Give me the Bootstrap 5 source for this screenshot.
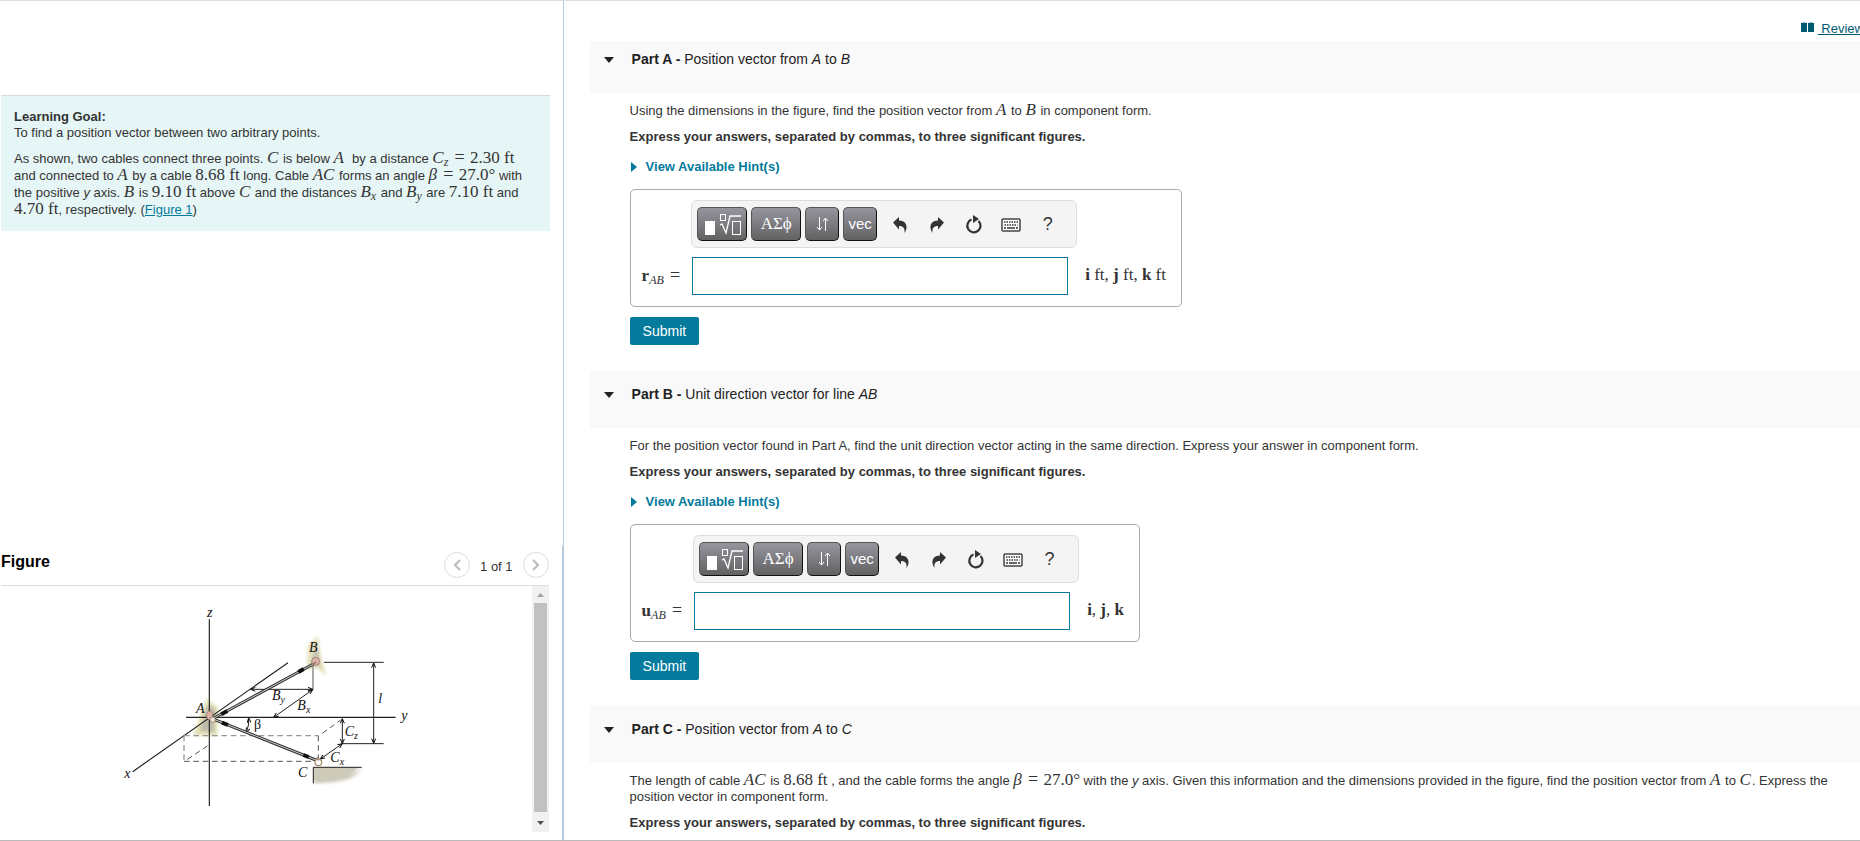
<!DOCTYPE html>
<html lang="en">
<head>
<meta charset="utf-8">
<meta name="viewport" content="width=device-width, initial-scale=1">
<title>Position vectors between two points</title>
<link href="https://cdn.jsdelivr.net/npm/bootstrap@5.3.0/dist/css/bootstrap.min.css" rel="stylesheet">
<style>
  body { font: 13px/16px "Liberation Sans", Arial, sans-serif; color: #333; background: #fff; }
  p { margin-bottom: 10px; }
  a { color: #047a9c; }
  .screen { height: 100vh; border-top: 1px solid #ddd; border-bottom: 1px solid #bbb; }
  .side { flex: 0 0 30.3%; min-width: 0; }
  .side-top { border-right: 1px solid #b8cbdd; padding: 94px 13px 0 1px; }
  .side-bottom { border-right: 2px solid #b8cbdd; padding: 0 13px 8px 1px; }
  .goal { background: #e6f6f6; border-top: 1px solid #d6dcdc; padding: 13px 13px 3px; line-height: 17px; }
  .goal .intro { line-height: 16px; margin-bottom: 9px; }
  .tex { font-family: "Liberation Serif", "Times New Roman", serif; font-size: 17px; line-height: 0; white-space: nowrap; }
  .tex sub, .tex sup { font-size: 12px; }
  .tex i { padding-right: 1px; }
  .rel { font-size: 18px; padding: 0 1px; }
  .fig-head { height: 40px; border-bottom: 1px solid #ddd; padding-bottom: 2px; }
  .fig-head h2 { font-size: 16px; line-height: 20px; font-weight: 700; color: #000; padding-bottom: 5px; }
  .pager { width: 26px; height: 26px; border: 1px solid #ddd; border-radius: 50%; background: #fff; }
  .page-no { padding: 5px 10px 0; }
  .fig-body { height: 246px; }
  .diagram { width: 330px; height: 230px; margin: 4px 0 0 99px; }
  .track { width: 17px; background: #f1f1f1; }
  .thumb { width: 13px; background: #c1c1c1; }
  .main { min-width: 0; padding-left: 26px; }
  .review { height: 40px; padding-top: 20px; white-space: nowrap; margin-right: -4px; }
  .review a { color: #005a70; }
  .part-bar { background: #f9f9f9; padding: 15px 14px; font-size: 14px; color: #222; height: 57px; }
  .part-bar.pinned { height: 52px; padding-top: 10px; }
  .part-bar button { width: 28px; }
  .part-body { padding: 10px 30px 26px 40px; }
  .hint { color: #047a9c; font-size: 13px; line-height: 16px; margin: 14px 0; }
  .answer { border: 1px solid #aaa; border-radius: 5px; padding: 10px 15px 11px 11px; }
  .answer label { margin: 57px 10px 0 0; height: 38px; line-height: 36px; }
  .units { margin: 57px 0 0 8px; height: 38px; line-height: 36px; }
  .editor { width: 386px; }
  .tools { height: 48px; border: 1px solid #ddd; border-radius: 6px; background: #f4f4f4; padding: 0 5px; gap: 4px; margin-bottom: 9px; }
  .key { height: 34px; border: 1px solid #000; border-color: #555 #111 #111 #555; border-radius: 5px; background: linear-gradient(#96959e, #626262); color: #fff; }
  .key.wide { width: 50px; }
  .key.slim { width: 34px; }
  .key .greek { font: 17px/30px "Liberation Serif", serif; }
  .key .word { font-size: 15px; line-height: 28px; }
  .tool { width: 37px; height: 34px; color: #333; }
  .tool .qmark { font-size: 18px; }
  .entry { width: 376px; height: 38px; border: 1px solid #047a9c; border-radius: 0; margin-left: 1px; }
  .send { background: #047a9c; color: #fff; font-size: 14px; line-height: 16px; border: 0; border-radius: 2px; padding: 6px 13px; margin-top: 10px; }
</style>
</head>
<body>
<svg class="d-none" xmlns="http://www.w3.org/2000/svg">
  <symbol id="i-root" viewBox="0 0 40 26"><rect x="3" y="10" width="10" height="14" fill="#fff"/><g fill="none" stroke="#fff"><rect x="18.500" y="3.500" width="5" height="6"/><path d="M18 14l2-1 4 9 4-17h11" stroke-width="1.300"/><rect x="30.500" y="10.500" width="8" height="13"/></g></symbol>
  <symbol id="i-swap" viewBox="0 0 14 18"><g fill="none" stroke="#fff"><path d="M4.500 2v13M2 12l2.500 3L7 12M10.500 16V3M8 6l2.500-3L13 6"/></g></symbol>
  <symbol id="i-undo" viewBox="0 0 14 16"><path fill="#333" d="M0 5.500L6 0v3.500c5 0 8 3 7.500 7.500-.3 2-1 3.500-2 5 .5-5-1-7-5.500-7v3.500z"/></symbol>
  <symbol id="i-reset" viewBox="0 0 18 20"><path d="M6.500 4.600A6.600 6.600 0 1 0 13.500 6" fill="none" stroke="#333" stroke-width="2.200"/><path fill="#333" d="M8 0l6 4-6 4z"/></symbol>
  <symbol id="i-keys" viewBox="0 0 20 14"><rect x="1" y="1" width="18" height="12" rx="1" fill="#fff" stroke="#444" stroke-width="1.500"/><path d="M3 4h14M3.500 7h13" stroke="#333" stroke-width="1.500" stroke-dasharray="1.500 1"/><path d="M3 10h2m1 0h8m1 0h2" stroke="#333" stroke-width="1.500"/></symbol>
</svg>

<div class="screen d-flex overflow-hidden">
  <aside class="side d-flex flex-column">
    <div class="side-top flex-fill">
      <section class="goal">
        <p class="intro"><strong>Learning Goal:</strong><br>To find a position vector between two arbitrary points.</p>
        <p>As shown, two cables connect three points. <span class="tex"><i>C</i></span> is below <span class="tex"><i>A</i></span>&nbsp; by a distance <span class="tex"><i>C<sub>z</sub></i> <span class="rel">=</span> 2.30 ft</span><br>
        and connected to <span class="tex"><i>A</i></span> by a cable <span class="tex">8.68 ft</span> long. Cable <span class="tex"><i>AC</i></span> forms an angle <span class="tex"><i>β</i> <span class="rel">=</span> 27.0°</span> with<br>
        the positive <i>y</i> axis. <span class="tex"><i>B</i></span> is <span class="tex">9.10 ft</span> above <span class="tex"><i>C</i></span> and the distances <span class="tex"><i>B<sub>x</sub></i></span> and <span class="tex"><i>B<sub>y</sub></i></span> are <span class="tex">7.10 ft</span> and<br>
        <span class="tex">4.70 ft</span>, respectively. (<a href="#figure">Figure 1</a>)</p>
      </section>
    </div>

    <section class="side-bottom" id="figure">
      <div class="fig-head d-flex align-items-center">
        <h2 class="m-0 me-auto">Figure</h2>
        <button class="pager p-0 d-flex align-items-center justify-content-center" aria-label="Previous figure"><svg width="8" height="12" viewBox="0 0 8 12"><path d="M7 1L2 6l5 5" fill="none" stroke="#bbb" stroke-width="2"/></svg></button>
        <span class="page-no">1 of 1</span>
        <button class="pager p-0 d-flex align-items-center justify-content-center" aria-label="Next figure"><svg width="8" height="12" viewBox="0 0 8 12"><path d="M1 1l5 5-5 5" fill="none" stroke="#bbb" stroke-width="2"/></svg></button>
      </div>
      <div class="fig-body d-flex justify-content-between">
        <svg class="diagram" viewBox="0 0 990 690" role="img" aria-label="Cables AB and AC with axes x, y and z">
          <defs>
            <filter id="soft" x="-30%" y="-30%" width="160%" height="160%"><feGaussianBlur stdDeviation="5"/></filter>
            <marker id="tip" viewBox="0 0 16 14" refX="15" refY="7" markerWidth="16" markerHeight="14" markerUnits="userSpaceOnUse" orient="auto-start-reverse"><path d="M1 1L15 7 1 13" fill="none" stroke="#111" stroke-width="3"/></marker>
            <linearGradient id="ground"><stop offset="0" stop-color="#cdcab9"/><stop offset=".7" stop-color="#cfccbc"/><stop offset="1" stop-color="#fff"/></linearGradient>
          </defs>
          <g filter="url(#soft)">
            <path d="M653 138l-30 30-2 72 30-6 28 24-16-60z" fill="#e6e3bd"/>
            <path d="M650 155l-18 70 30 6z" fill="#c4c1b0"/>
            <path d="M320 325l-20 50-20 62 72 0 2-84z" fill="#e4e1b8"/>
            <path d="M320 345l-20 78 42 4 4-70z" fill="#bfbcac"/>
            <path d="M642 534h152c-16 32-80 46-152 46z" fill="url(#ground)"/>
          </g>
          <path d="M642 533h130c-30 28-70 36-130 38z" fill="#cdcab9"/>
          <g fill="none" stroke="#222" stroke-width="3">
            <path d="M328 88V648M258 382H887M98 545L564 218" stroke-width="3.500"/>
            <path d="M672 217H851M727 461H851"/>
            <path d="M639 225v74" stroke="#999" stroke-width="5"/>
            <path d="M640 580V532H785"/>
            <g marker-start="url(#tip)" marker-end="url(#tip)">
              <path d="M452 298H638"/><path d="M521 382L638 299"/><path d="M821 219V460"/><path d="M727 386V461"/><path d="M661 507L727 461"/><path d="M446 384Q448 405 439 427"/>
            </g>
            <path d="M252 437H655M252 437V514" stroke="#999" stroke-width="4" stroke-dasharray="17 11"/>
            <path d="M655 437V512M252 514H655M262 508L328 464M667 430L722 390" stroke="#555" stroke-dasharray="17 11"/>
          </g>
          <g>
            <path d="M342 384L640 222M342 388L655 513" stroke="#333" stroke-width="9"/>
            <path d="M342 384L640 222M342 388L655 513" stroke="#ccc" stroke-width="3"/>
            <path d="M364 373l18-10M595 246l16-9M366 398l18 7M610 495l16 6" stroke="#111" stroke-width="12"/>
          </g>
          <g fill="#ddb2a5" stroke="#886a60" stroke-width="2">
            <circle cx="647" cy="214" r="12"/><path d="M637 228l10-12" stroke-width="4"/>
            <ellipse cx="329" cy="376" rx="9" ry="13"/><circle cx="338" cy="389" r="8" fill="#eee4d8"/>
            <circle cx="655" cy="517" r="10" fill="#fff" stroke="#aa9170" stroke-width="4"/><path d="M645 507l10-6v12" fill="none"/>
          </g>
          <g font-family="Liberation Serif, serif" font-size="42" font-style="italic" fill="#111">
            <text x="321" y="80">z</text><text x="627" y="186">B</text><text x="288" y="368">A</text><text x="594" y="562">C</text>
            <text x="73" y="565">x</text><text x="904" y="391">y</text><text x="835" y="340">l</text>
            <text x="462" y="417" font-style="normal">β</text>
            <text x="516" y="331">B<tspan dy="9" font-size="30">y</tspan></text>
            <text x="592" y="361">B<tspan dy="9" font-size="30">x</tspan></text>
            <text x="734" y="438">C<tspan dy="9" font-size="30">z</tspan></text>
            <text x="691" y="515">C<tspan dy="9" font-size="30">x</tspan></text>
          </g>
        </svg>
        <div class="track d-flex flex-column align-items-center" aria-hidden="true">
          <svg width="17" height="17"><path d="M5 11h7l-3.500-4z" fill="#a3a3a3"/></svg>
          <div class="thumb flex-fill"></div>
          <svg width="17" height="20"><path d="M5 9h7l-3.500 4z" fill="#505050"/></svg>
        </div>
      </div>
    </section>
  </aside>

  <main class="main flex-fill overflow-hidden">
    <nav class="review d-flex justify-content-end">
      <svg class="me-1" width="13" height="12" viewBox="0 0 13 12"><path fill="#005a70" d="M0 2q3-1 6 0v9H0zM7 2q3-1 6 0v9H7z"/></svg><a href="#review">&nbsp;Review</a>
    </nav>

    <section>
      <header class="part-bar pinned d-flex align-items-start">
        <button class="btn p-0 border-0 text-start lh-1" aria-label="Collapse Part A"><svg width="10" height="6" viewBox="0 0 10 6"><path d="M0 0h10L5 6z" fill="#222"/></svg></button>
        <div><strong>Part A -</strong> Position vector from <i>A</i> to <i>B</i></div>
      </header>
      <div class="part-body">
        <p>Using the dimensions in the figure, find the position vector from <span class="tex"><i>A</i></span> to <span class="tex"><i>B</i></span> in component form.</p>
        <p><strong>Express your answers, separated by commas, to three significant figures.</strong></p>
        <button class="hint btn p-0 border-0 d-flex align-items-center fw-bold"><svg class="me-2" width="8" height="10" viewBox="0 0 8 10"><path d="M1 0l6 5-6 5z" fill="#047a9c"/></svg>View Available Hint(s)</button>
        <div class="answer d-inline-flex">
          <label for="rab" class="tex"><b>r</b><sub><i>AB</i></sub> <span class="rel">=</span></label>
          <div class="editor">
            <div class="tools d-flex align-items-center">
              <button class="key wide p-0" aria-label="Templates"><svg width="40" height="26"><use href="#i-root"/></svg></button>
              <button class="key wide p-0"><span class="greek">ΑΣϕ</span></button>
              <button class="key slim p-0" aria-label="Subscript and superscript"><svg width="14" height="18"><use href="#i-swap"/></svg></button>
              <button class="key slim p-0"><span class="word">vec</span></button>
              <div class="d-flex">
                <button class="tool btn p-0 border-0" aria-label="Undo"><svg width="14" height="16"><use href="#i-undo"/></svg></button>
                <button class="tool btn p-0 border-0" aria-label="Redo"><svg width="14" height="16"><use href="#i-undo" transform="matrix(-1 0 0 1 14 0)"/></svg></button>
                <button class="tool btn p-0 border-0" aria-label="Reset"><svg width="18" height="20"><use href="#i-reset"/></svg></button>
                <button class="tool btn p-0 border-0" aria-label="Keyboard shortcuts"><svg width="20" height="14"><use href="#i-keys"/></svg></button>
                <button class="tool btn p-0 border-0"><span class="qmark">?</span></button>
              </div>
            </div>
            <input class="entry form-control p-1" id="rab" type="text">
          </div>
          <span class="units tex"><b>i</b> ft, <b>j</b> ft, <b>k</b> ft</span>
        </div>
        <div class="d-flex"><button class="send" type="submit">Submit</button></div>
      </div>
    </section>

    <section>
      <header class="part-bar d-flex align-items-start">
        <button class="btn p-0 border-0 text-start lh-1" aria-label="Collapse Part B"><svg width="10" height="6" viewBox="0 0 10 6"><path d="M0 0h10L5 6z" fill="#222"/></svg></button>
        <div><strong>Part B -</strong> Unit direction vector for line <i>AB</i></div>
      </header>
      <div class="part-body">
        <p>For the position vector found in Part A, find the unit direction vector acting in the same direction. Express your answer in component form.</p>
        <p><strong>Express your answers, separated by commas, to three significant figures.</strong></p>
        <button class="hint btn p-0 border-0 d-flex align-items-center fw-bold"><svg class="me-2" width="8" height="10" viewBox="0 0 8 10"><path d="M1 0l6 5-6 5z" fill="#047a9c"/></svg>View Available Hint(s)</button>
        <div class="answer d-inline-flex">
          <label for="uab" class="tex"><b>u</b><sub><i>AB</i></sub> <span class="rel">=</span></label>
          <div class="editor">
            <div class="tools d-flex align-items-center">
              <button class="key wide p-0" aria-label="Templates"><svg width="40" height="26"><use href="#i-root"/></svg></button>
              <button class="key wide p-0"><span class="greek">ΑΣϕ</span></button>
              <button class="key slim p-0" aria-label="Subscript and superscript"><svg width="14" height="18"><use href="#i-swap"/></svg></button>
              <button class="key slim p-0"><span class="word">vec</span></button>
              <div class="d-flex">
                <button class="tool btn p-0 border-0" aria-label="Undo"><svg width="14" height="16"><use href="#i-undo"/></svg></button>
                <button class="tool btn p-0 border-0" aria-label="Redo"><svg width="14" height="16"><use href="#i-undo" transform="matrix(-1 0 0 1 14 0)"/></svg></button>
                <button class="tool btn p-0 border-0" aria-label="Reset"><svg width="18" height="20"><use href="#i-reset"/></svg></button>
                <button class="tool btn p-0 border-0" aria-label="Keyboard shortcuts"><svg width="20" height="14"><use href="#i-keys"/></svg></button>
                <button class="tool btn p-0 border-0"><span class="qmark">?</span></button>
              </div>
            </div>
            <input class="entry form-control p-1" id="uab" type="text">
          </div>
          <span class="units tex"><b>i</b>, <b>j</b>, <b>k</b></span>
        </div>
        <div class="d-flex"><button class="send" type="submit">Submit</button></div>
      </div>
    </section>

    <section>
      <header class="part-bar d-flex align-items-start">
        <button class="btn p-0 border-0 text-start lh-1" aria-label="Collapse Part C"><svg width="10" height="6" viewBox="0 0 10 6"><path d="M0 0h10L5 6z" fill="#222"/></svg></button>
        <div><strong>Part C -</strong> Position vector from <i>A</i> to <i>C</i></div>
      </header>
      <div class="part-body">
        <p>The length of cable <span class="tex"><i>AC</i></span> is <span class="tex">8.68 ft</span> , and the cable forms the angle <span class="tex"><i>β</i> <span class="rel">=</span> 27.0°</span> with the <i>y</i> axis. Given this information and the dimensions provided in the figure, find the position vector from <span class="tex"><i>A</i></span> to <span class="tex"><i>C</i></span>. Express the position vector in component form.</p>
        <p><strong>Express your answers, separated by commas, to three significant figures.</strong></p>
      </div>
    </section>
  </main>
</div>
<script src="https://cdn.jsdelivr.net/npm/bootstrap@5.3.0/dist/js/bootstrap.bundle.min.js"></script>
</body>
</html>
